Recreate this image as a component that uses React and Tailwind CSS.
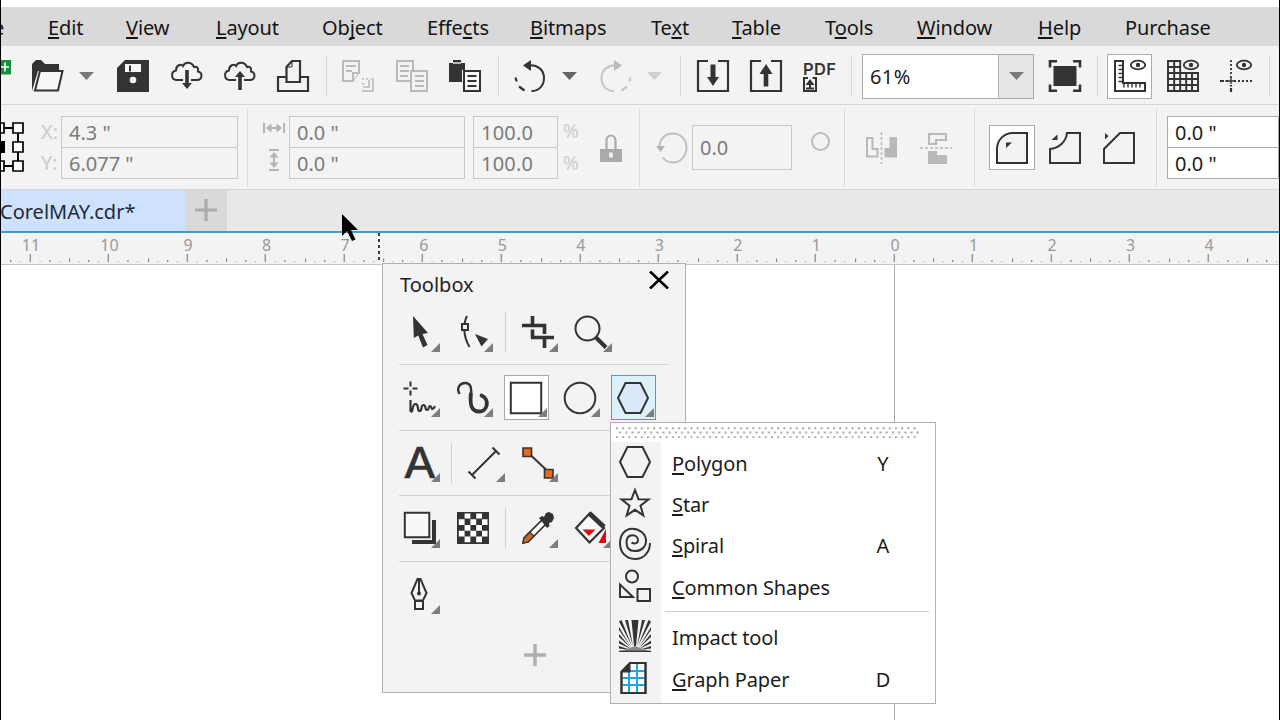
import React from 'react';

const DARK = '#333333';
const FADED = '#b9b9b9';

// width = distance from this label to the next one
const menuItems = [
  { pre: '', key: 'E', post: 'dit', width: 'w-[78px]' },
  { pre: '', key: 'V', post: 'iew', width: 'w-[90px]' },
  { pre: '', key: 'L', post: 'ayout', width: 'w-[106px]' },
  { pre: 'Ob', key: 'j', post: 'ect', width: 'w-[105px]' },
  { pre: 'Effe', key: 'c', post: 'ts', width: 'w-[103px]' },
  { pre: '', key: 'B', post: 'itmaps', width: 'w-[121px]' },
  { pre: 'Te', key: 'x', post: 't', width: 'w-[81px]' },
  { pre: '', key: 'T', post: 'able', width: 'w-[93px]' },
  { pre: 'T', key: 'o', post: 'ols', width: 'w-[92px]' },
  { pre: '', key: 'W', post: 'indow', width: 'w-[121px]' },
  { pre: '', key: 'H', post: 'elp', width: 'w-[87px]' },
  { pre: 'Purchase', key: '', post: '', width: 'w-[90px]' },
];

const rulerMarks = ['11', '10', '9', '8', '7', '6', '5', '4', '3', '2', '1', '0', '1', '2', '3', '4', ''];

function Icon({ children, className = '', color = DARK, sw = 2 }) {
  return (
    <svg viewBox="0 0 32 32" fill="none" stroke={color} strokeWidth={sw} className={`block w-8 h-8 shrink-0 overflow-visible ${className}`}>
      {children}
    </svg>
  );
}

function Label({ pre = '', hot = '', post = '' }) {
  return (
    <span>
      {pre}
      {hot && <span className="underline decoration-[1.5px] underline-offset-[2px] [text-decoration-skip-ink:none]">{hot}</span>}
      {post}
    </span>
  );
}

function Caret({ className = '' }) {
  return (
    <svg viewBox="0 0 15 8" className={`block w-[15px] h-2 shrink-0 ${className}`}>
      <path d="M0 0h15L7.5 8z" fill="currentColor" />
    </svg>
  );
}

function BarDivider({ className = '' }) {
  return <div className={`w-px h-10 shrink-0 bg-[#d6d6d6] ${className}`} />;
}

function PropDivider({ className = '' }) {
  return <div className={`w-px h-[79px] shrink-0 bg-[#dadada] ${className}`} />;
}

function Eye() {
  return (
    <g>
      <ellipse cx="24" cy="5" rx="7.2" ry="4.3" strokeWidth="1.8" />
      <circle cx="24" cy="5" r="2.2" fill={DARK} stroke="none" />
    </g>
  );
}

function DoubleField({ top, bottom, className = '' }) {
  return (
    <div className={`flex flex-col shrink-0 h-[63px] border ${className}`}>
      <div className="flex-1 flex items-center pl-[7px] pt-[2px] border-b border-inherit whitespace-pre">{top}</div>
      <div className="flex-1 flex items-center pl-[7px] pt-[2px] whitespace-pre">{bottom}</div>
    </div>
  );
}

function MenuBar() {
  return (
    <div className="h-[39px] shrink-0 bg-[#d9d9d9] flex items-center pt-[2px] text-[#151515]">
      <div className="w-[48px] shrink-0 overflow-hidden"><span className="-ml-[7px]">e</span></div>
      {menuItems.map((item) => (
        <div key={item.pre + item.key + item.post} className={`shrink-0 tracking-[-0.1px] ${item.width}`}>
          <Label pre={item.pre} hot={item.key} post={item.post} />
        </div>
      ))}
    </div>
  );
}

function StandardBar() {
  return (
    <div className="h-[59px] shrink-0 bg-[#f3f3f3] border-b border-[#d6d6d6] flex items-center pt-[2px] overflow-hidden">
      <svg viewBox="0 0 11 32" className="block w-[11px] h-8 shrink-0">
        <path d="M0 0h11v14.500H0z" fill="#14913d" />
        <path d="M5 2.500v9M0 7h9" stroke="#fff" strokeWidth="1.6" />
      </svg>
      <Icon className="ml-[21px]">
        <path d="M0 31V4L4 0h5l4 4h14v7H6z" fill={DARK} stroke="none" />
        <path d="M8 11h22.500L26 30.500H3z" fill="#f8f8f8" />
      </Icon>
      <Caret className="ml-[15px] text-[#777]" />
      <Icon className="ml-[23px]">
        <path d="M8 0h24v32H0V8z" fill={DARK} stroke="none" />
        <path d="M8 4h16v8H8z" fill="#f5f5f5" stroke="none" />
        <path d="M13 5.500v6" />
        <circle cx="16" cy="20" r="3.300" fill="#f5f5f5" stroke="none" />
      </Icon>
      <Icon className="ml-[22px]">
        <path d="M12 20H5.500a4.800 4.800 0 0 1-.5-9.500C5 5 10 3.500 12 6c1.500-4 8.500-5 11 1 3-1 5 1.500 4 4.500 5 1 4.500 8.500-1 8.500h-6" />
        <path d="M16 10v14" strokeWidth="3.600" />
        <path d="M11 23h10l-5 6z" fill={DARK} stroke="none" />
      </Icon>
      <Icon className="ml-[21px]">
        <path d="M12 20H5.500a4.800 4.800 0 0 1-.5-9.500C5 5 10 3.500 12 6c1.500-4 8.500-5 11 1 3-1 5 1.500 4 4.500 5 1 4.500 8.500-1 8.500h-6" />
        <path d="M16 30V15" strokeWidth="3.600" />
        <path d="M11 17h10l-5-6z" fill={DARK} stroke="none" />
      </Icon>
      <Icon className="ml-[21px]" sw={2.200}>
        <path d="M10 17H1v14h30V17h-8" />
        <path d="M9.500 22V7L15 1h8v21z" />
        <path d="M15 1v6h-5" strokeWidth="1" />
      </Icon>
      <BarDivider className="ml-[17px]" />
      <Icon className="ml-[15px]" color={FADED}>
        <path d="M1 1h16v12h-6v8H1zM4 6h10M4 11h6" />
        <path d="M17 13l-6 8" strokeWidth="1" />
        <path d="M20 19h9M20 24h3" strokeWidth="1.500" strokeDasharray="2 2" />
        <path d="M31 18v13H20M27 20v7H21" strokeWidth="1.600" />
      </Icon>
      <Icon className="ml-[22px]" color={FADED}>
        <path d="M14 21H1V1h16v9M4 6h9M4 11h9M4 16h8" />
        <path d="M15 11h16v20H15zM19 16h9M19 21h9M19 26h9" />
      </Icon>
      <Icon className="ml-[21px]">
        <path d="M0 3h4V0h8v3h4v7h-3v12H0z" fill={DARK} stroke="none" />
        <path d="M4 3h8" stroke="#f3f3f3" strokeWidth="1.400" />
        <path d="M15 11h16v20H15z" fill="#f8f8f8" />
        <path d="M18.500 16h9M18.500 21h9M18.500 26h9" />
      </Icon>
      <BarDivider className="ml-[17px]" />
      <Icon className="ml-[15px]">
        <path d="M14 5.500C24 4 30 10.500 30 18s-5 13-12.500 13" />
        <path d="M17 0v11L9 5.500z" fill={DARK} stroke="none" />
        <path d="M1.500 17.500l1.200 4M5 26.500l5.500 4" strokeWidth="2.200" />
      </Icon>
      <Caret className="ml-[16px] text-[#666]" />
      <Icon className="ml-[23px]" color="#c6c6c6">
        <path d="M18 5.500C8 4 1.500 10.500 1.500 18s5 13 12.500 13" />
        <path d="M14 0v11l8-5.500z" fill="#bbb" stroke="none" />
        <path d="M30.500 17.500l-1.200 4M27 26.500l-5.500 4" strokeWidth="2.200" />
      </Icon>
      <Caret className="ml-[15px] text-[#cfcfcf]" />
      <BarDivider className="ml-[18px]" />
      <Icon className="ml-[16px]" sw={2.200}>
        <path d="M11 1H1v30h30V1H21" />
        <path d="M16 4.500V19" strokeWidth="5" />
        <path d="M10 17h12l-6 9z" fill={DARK} stroke="none" />
      </Icon>
      <Icon className="ml-[21px]" sw={2.200}>
        <path d="M11 1H1v30h30V1H21" />
        <path d="M16 26.500V12" strokeWidth="4.600" />
        <path d="M9.500 14h13L16 4z" fill={DARK} stroke="none" />
      </Icon>
      <div className="ml-[21px] w-[34px] h-8 shrink-0 flex flex-col text-[#333]">
        <span className="h-[17px] leading-[18px] text-[16.500px] font-semibold tracking-[0.300px] font-['Inter']">PDF</span>
        <svg viewBox="0 0 14 15" className="block w-[14px] h-[15px]" fill="none" stroke={DARK} strokeWidth="2">
          <path d="M5 1H1v13h12V1H9.500M7 12V6M3 11.500h8" />
          <path d="M2.500 8h9L7 2z" fill={DARK} stroke="none" />
        </svg>
      </div>
      <BarDivider className="ml-[14px]" />
      <div className="ml-[10px] w-[172px] h-[45px] shrink-0 border-[1.500px] border-[#ababab] bg-white flex items-center">
        <span className="pl-[7px] pt-[2px] flex-1 text-[#222] tracking-[0.400px]">61%</span>
        <div className="w-[35px] h-full bg-[#e6e6e6] border-l border-[#b5b5b5] flex items-center justify-center">
          <Caret className="text-[#7a7a7a]" />
        </div>
      </div>
      <Icon className="ml-[15px]" sw={2.600}>
        <path d="M4.500 6h23v20h-23z" fill={DARK} stroke="none" />
        <path d="M1 7.500V1.200h7M24 1.200h7v6.300M31 24.500v6.300h-7M8 30.800H1v-6.300" />
      </Icon>
      <BarDivider className="ml-[16px]" />
      <div className="ml-[9px] w-[45px] h-[45px] shrink-0 bg-white border border-[#aaaaaa] flex items-center justify-center">
        <Icon>
          <path d="M1 1h8v22h22v8H1z" />
          <path d="M4.500 5.500H9M4.500 9.500H9M4.500 13.500H9M4.500 17.500H9M4.500 21.500H9M10 23v4.500M14 23v4.500M18 23v4.500M22 23v4.500M26 23v4.500" strokeWidth="1.400" />
          <Eye />
        </Icon>
      </div>
      <Icon className="ml-[15px]" sw={1.900}>
        <path d="M1 0v32M7.200 0v32M13.200 0v32M19.200 12v20M25 12v20M31 12v20M0 1h14M0 7h14M0 13h32M0 19h32M0 25h32M0 31h32" />
        <Eye />
      </Icon>
      <Icon className="ml-[21px]">
        <path d="M11 0v20M14 21h18" strokeDasharray="2 2" strokeWidth="1.800" />
        <path d="M11 18v6M8 21h6" strokeWidth="1.400" />
        <path d="M0 21h4M5.500 21H8M11 25v1.500M11 28v4" strokeWidth="2.200" />
        <Eye />
      </Icon>
      <BarDivider className="ml-[17px]" />
    </div>
  );
}

function PropertyBar() {
  return (
    <div className="h-[85px] shrink-0 bg-[#f3f3f3] border-b border-[#d6d6d6] flex items-center overflow-hidden text-[#7b7b7b]">
      <svg viewBox="0 0 24 50" className="block w-6 h-[50px] shrink-0" fill="none" stroke="#000" strokeWidth="2">
        <path d="M0 6h18v38H0" />
        <path d="M-6 1h10v10H-6zM13 1h10v10H13zM13 20h10v10H13zM-6 39h10v10H-6zM13 39h10v10H13z" fill="#fff" strokeWidth="1.700" />
        <path d="M0 19h5v12H0z" fill="#000" stroke="none" />
      </svg>
      <div className="ml-[17px] w-[20px] h-[63px] shrink-0 flex flex-col text-[#cccccc]">
        <span className="flex-1 flex items-center pt-px">X:</span>
        <span className="flex-1 flex items-center pt-px">Y:</span>
      </div>
      <DoubleField top={'4.3 "'} bottom={'6.077 "'} className="w-[177px] border-[#c9c9c9]" />
      <PropDivider className="ml-[9px]" />
      <div className="ml-[14px] w-[23px] h-[63px] shrink-0 flex flex-col items-center justify-around">
        <svg viewBox="0 0 22 10" className="block w-[22px] h-[10px]" fill="none" stroke="#b4b4b4" strokeWidth="2">
          <path d="M1 0v10M21 0v10M6 5h10" />
          <path d="M3 5l5.500-4.500v9zM19 5l-5.500-4.500v9z" fill="#b4b4b4" stroke="none" />
        </svg>
        <svg viewBox="0 0 10 22" className="block w-[10px] h-[22px]" fill="none" stroke="#b4b4b4" strokeWidth="2">
          <path d="M0 1h10M0 21h10M5 6v10" />
          <path d="M5 3L.5 8.500h9zM5 19L.5 13.500h9z" fill="#b4b4b4" stroke="none" />
        </svg>
      </div>
      <DoubleField top={'0.0 "'} bottom={'0.0 "'} className="ml-[4px] w-[176px] border-[#c9c9c9]" />
      <DoubleField top="100.0" bottom="100.0" className="ml-[8px] w-[85px] tracking-[0.200px] border-[#c9c9c9]" />
      <div className="ml-[5px] w-[20px] h-[63px] shrink-0 flex flex-col text-[19px] text-[#cccccc]">
        <span className="flex-1 flex items-center pt-px">%</span>
        <span className="flex-1 flex items-center pt-px">%</span>
      </div>
      <svg viewBox="0 0 22 28" className="ml-[17px] mt-px block w-[22px] h-7 shrink-0">
        <path d="M6.500 15V6.500a4.500 5 0 0 1 9 0V15" fill="none" stroke="#aaa" strokeWidth="2.200" />
        <path d="M0 15h22v13H0z" fill="#aaa" />
        <path d="M11 18.500v5" stroke="#f3f3f3" strokeWidth="3.500" />
      </svg>
      <PropDivider className="ml-[17px]" />
      <Icon className="ml-[16px] mt-px" color="#c0c0c0">
        <path d="M3.500 14C4 6 10 1.500 17 1.500c8 0 13.500 6.500 13.500 14S25 30.500 17 30.500c-4 0-8-2-10-5" />
        <path d="M0 14h9l-4.500 6z" fill="#b0b0b0" stroke="none" />
      </Icon>
      <div className="ml-[4px] mt-px w-[100px] h-[45px] shrink-0 border border-[#c9c9c9] flex items-center pl-[7px] pt-px">0.0</div>
      <div className="ml-[19px] w-[19px] h-[19px] shrink-0 rounded-full border-[2.500px] border-[#bdbdbd] -mt-[12px]" />
      <PropDivider className="ml-[14px]" />
      <Icon className="ml-[21px] mt-px" color={FADED}>
        <path d="M1 6h5.500v11h5v7.500H1z" />
        <path d="M30 6h-5.500v11h-5v7.500H30z" fill={FADED} />
        <path d="M15.500 0v32" strokeWidth="1.600" strokeDasharray="3 2" />
      </Icon>
      <Icon className="ml-[22px] mt-px" color={FADED}>
        <path d="M9 2h17v6H16v4H9z" />
        <path d="M9 20h7v4h10v7H9z" fill={FADED} />
        <path d="M0 16h32" strokeWidth="1.600" strokeDasharray="3 2" />
      </Icon>
      <PropDivider className="ml-[22px]" />
      <div className="ml-[14px] mt-px w-[46px] h-[45px] shrink-0 bg-white border border-[#aaaaaa] flex items-center justify-center">
        <Icon>
          <path d="M1 31V17C1 8 8 1 17 1h14v30z" fill="#f3f3f3" />
          <path d="M10 10.500h6L10 16z" fill={DARK} stroke="none" />
        </Icon>
      </div>
      <Icon className="ml-[14px] mt-px">
        <path d="M1 31V17C10 16 17 10 18 1h13v30z" />
        <path d="M8.500 2.500V8H2.500z" fill={DARK} stroke="none" />
      </Icon>
      <Icon className="ml-[22px] mt-px">
        <path d="M1 31V17L17 1h14v30z" />
        <path d="M2 1v6.500L5.500 4z" fill={DARK} stroke="none" />
      </Icon>
      <PropDivider className="ml-[21px]" />
      <DoubleField top={'0.0 "'} bottom={'0.0 "'} className="ml-[10px] w-[112px] bg-white border-[#aaaaaa] text-[#1c1c1c]" />
    </div>
  );
}

function TabStrip() {
  return (
    <div className="h-[43px] shrink-0 bg-[#e8e8e8] border-b-2 border-[#3c9fc4] flex items-stretch">
      <div className="w-[185px] bg-[#cfe2fd] flex items-center pt-[2px] text-[#1f2a38] overflow-hidden">CorelMAY.cdr*</div>
      <div className="w-[42px] bg-[#d9d9d9] flex items-center justify-center">
        <svg viewBox="0 0 22 22" className="block w-[22px] h-[22px] -mt-[2px]">
          <path d="M11 0v22M0 11h22" stroke="#ababab" strokeWidth="3.200" />
        </svg>
      </div>
    </div>
  );
}

function Ruler() {
  return (
    <div className="h-[32px] shrink-0 bg-[#f3f3f3] border-b border-[#c4c4c4] overflow-hidden">
      <div className="flex -ml-[9.300px]">
        {rulerMarks.map((n, i) => (
          <div key={i} className="w-[78.550px] shrink-0 flex flex-col items-center">
            <span className="h-[21px] leading-[24px] pl-[2px] text-[16px] text-[#999]">{n}</span>
            <svg viewBox="0 0 78.550 10" className="block w-[78.550px] h-[10px]" stroke="#888" strokeWidth="1">
              <path d="M39.300 0v8" stroke="#999" strokeWidth="1.500" />
              <path d="M.5 4.500V8M19.700 6v2M58.900 6v2" strokeWidth="1.300" />
              <path d="M9.900 7v1.200M29.500 7v1.200M49.100 7v1.200M68.700 7v1.200" stroke="#aaa" />
            </svg>
          </div>
        ))}
      </div>
    </div>
  );
}

function Tool({ children, flyout = true, className = 'border border-transparent' }) {
  return (
    <div className={`relative w-[45px] h-[45px] shrink-0 flex items-center justify-center ${className}`}>
      {children}
      {flyout && (
        <svg viewBox="0 0 9 9" className="absolute right-px bottom-[2px] block w-[9px] h-[9px]">
          <path d="M9 0v9H0z" fill="#7d7d7d" />
        </svg>
      )}
    </div>
  );
}

function ToolRow({ children }) {
  return (
    <div className="h-[65.400px] shrink-0 flex items-center">
      <div className="-ml-[2px] flex items-center gap-[8.400px]">{children}</div>
    </div>
  );
}

function ToolDivider() {
  return <div className="w-px h-10 shrink-0 bg-[#cfcfcf] mx-[1px]" />;
}

function Hexagon({ fill = 'none' }) {
  return <path d="M1 16L8.500 1h15L31 16l-7.500 15h-15z" fill={fill} />;
}

function Toolbox() {
  return (
    <div className="absolute left-[382px] top-[263px] w-[304px] h-[430px] bg-[#f3f3f3] border-[1.500px] border-[#b0b0b0] px-4 flex flex-col">
      <div className="h-[36px] shrink-0 flex items-center justify-between pl-px text-[#222]">
        <span className="mt-[6px]">Toolbox</span>
        <svg viewBox="0 0 20 18" className="block w-5 h-[18px] -mt-[4px]">
          <path d="M1 .5l18 17M19 .5l-18 17" stroke="#000" strokeWidth="2.600" />
        </svg>
      </div>
      <div className="flex flex-col divide-y divide-[#d2d2d2]">
        <ToolRow>
          <Tool>
            <Icon>
              <path d="M9 0l15 17-5.500 1 5 11-4.500 2.500-4.800-12L9.800 22z" fill={DARK} stroke="none" />
            </Icon>
          </Tool>
          <Tool>
            <Icon>
              <path d="M10 0C6 8 6 20 12.500 31" />
              <path d="M5 8h6v6H5z" fill="#f3f3f3" />
              <path d="M18 18l13 5-6.500 7.500z" fill={DARK} stroke="none" />
            </Icon>
          </Tool>
          <ToolDivider />
          <Tool>
            <Icon sw={3.600}>
              <path d="M0 9.500h22.500V18M10.500 0v9M9 21.500h23M10.500 13.500v8M22.500 23v9" />
            </Icon>
          </Tool>
          <Tool>
            <Icon>
              <circle cx="12.500" cy="12.500" r="12" />
              <path d="M21 21.500l10 10" strokeWidth="4" />
            </Icon>
          </Tool>
        </ToolRow>
        <ToolRow>
          <Tool>
            <Icon>
              <path d="M6.500-.5v5M6.500 8.500v5M-.5 6.500h5M8.500 6.500h5" strokeWidth="2" />
              <path d="M6.500 18v11c3 3 1-7 5-7 4 0 1 7 4 7s1-6 4-6 1 5 3.500 5 1-4 3-4 1 3 2.500 3 1.500-2.500 3-2.500" strokeWidth="2.200" />
            </Icon>
          </Tool>
          <Tool>
            <Icon>
              <path d="M2.500 12C-1 6 3 1 8 1c8 0 6 9 6 14" strokeWidth="2.400" />
              <path d="M13.800 12C13 22 14 29 21.500 29.500 31 30 33 17 24.500 13.500" strokeWidth="3.800" strokeLinecap="round" />
            </Icon>
          </Tool>
          <Tool className="bg-white border border-[#a8a8a8]">
            <Icon>
              <path d="M.8.8h30.400v30.400H.8z" />
            </Icon>
          </Tool>
          <Tool>
            <Icon>
              <circle cx="16" cy="16" r="15.300" />
            </Icon>
          </Tool>
          <Tool className="bg-[#dcf1fa] border-[1.500px] border-[#3aa7cf]">
            <Icon>
              <Hexagon fill="#dbe8fb" />
            </Icon>
          </Tool>
        </ToolRow>
        <ToolRow>
          <Tool>
            <span className="text-[43px] leading-[45px] font-['Inter'] font-normal [-webkit-text-stroke:0.700px_#333] scale-x-110 text-[#333]">A</span>
          </Tool>
          <ToolDivider />
          <Tool>
            <Icon>
              <path d="M4 28L28 4M.5 24.500l7 7M24.500.5l7 7" />
            </Icon>
          </Tool>
          <Tool>
            <Icon>
              <path d="M8 7.500l17 16" />
              <path d="M1 1h8.500v8.500H1zM22.500 22.500H31V31h-8.500z" fill="#e46a1c" strokeWidth="1.600" />
            </Icon>
          </Tool>
        </ToolRow>
        <ToolRow>
          <Tool>
            <Icon>
              <path d="M.8.8h24.500v24.500H.8z" fill="#f8f8f8" />
              <path d="M8 30h22V8" strokeWidth="4" />
            </Icon>
          </Tool>
          <Tool flyout={false}>
            <Icon>
              <path d="M0 0h32v32H0z" fill={DARK} stroke="none" />
              <path
                d="M7.600 1.500h5.800v5h-5.800zM19.200 1.500H25v5h-5.800zM1.800 7.200h5.800V13H1.800zM13.400 7.200h5.800V13h-5.800zM25 7.200h5.500V13H25zM7.600 13h5.800v5.800H7.600zM19.200 13H25v5.800h-5.800zM1.800 18.800h5.800v5.800H1.800zM13.400 18.800h5.800v5.800h-5.800zM25 18.800h5.500v5.800H25zM7.600 24.600h5.800v5.600H7.600zM19.200 24.600H25v5.600h-5.800z"
                fill="#fff"
                stroke="none"
              />
            </Icon>
          </Tool>
          <ToolDivider />
          <Tool>
            <Icon>
              <path d="M1 31l1-5L20 8l4 4L6 30z" fill="#fff" strokeWidth="1.700" />
              <path d="M1 31l1-5 6-6 4 4-6 6z" fill="#c8692c" strokeWidth="1.200" />
              <path d="M17 6l3-2 2 1 2-4 3-1 4 2 1 4-2 4-3 1 .5 3-2.500 2z" fill={DARK} stroke="none" />
            </Icon>
          </Tool>
          <Tool>
            <Icon sw={2.200}>
              <path d="M1 16L14.500 1.500 29 16 14.500 30.500z" fill="#f8f8f8" />
              <path d="M14 1l15 14" strokeWidth="5" />
              <path d="M7.500 17.500h13L14 24z" fill="#e30613" stroke="none" />
              <path d="M23.500 31l7.500-14v14z" fill="#e30613" stroke="none" />
            </Icon>
          </Tool>
        </ToolRow>
        <ToolRow>
          <Tool>
            <Icon>
              <path d="M13.500 1h3L22.500 15 19 22.500h-8L7.500 15z" />
              <path d="M11 23h8v8h-8z" />
              <path d="M15 2v13" />
              <circle cx="15" cy="15.500" r="2" fill={DARK} stroke="none" />
            </Icon>
          </Tool>
        </ToolRow>
      </div>
      <svg viewBox="0 0 22 22" className="self-center block w-[22px] h-[22px] mt-[17px] ml-[1px]">
        <path d="M11 0v22M0 11h22" stroke="#b0b0b0" strokeWidth="3.500" />
      </svg>
    </div>
  );
}

function FlyoutItem({ icon, hot, text, shortcut }) {
  return (
    <div className="h-[41.400px] flex items-center">
      <div className="w-[50px] h-full shrink-0 flex items-center pl-[7.500px] pb-[2px]">{icon}</div>
      <div className="pl-[11px] pt-[2px] w-[211px] shrink-0 tracking-[-0.120px]"><Label hot={hot} post={text} /></div>
      <div className="w-[22px] pt-[2px] text-center">{shortcut}</div>
    </div>
  );
}

function Flyout() {
  return (
    <div className="absolute left-[610px] top-[422px] w-[326px] h-[282px] bg-white border-[1.500px] border-[#b0b0b0] text-[#1c1c1c]">
      <svg className="block w-[303px] h-[11px] ml-[5px] mt-[4px]">
        <defs>
          <pattern id="grip" width="6.200" height="9" patternUnits="userSpaceOnUse">
            <path d="M0 .2h2v2H0zM3.100 4.500h2v2h-2z" fill="#a6a6a6" />
          </pattern>
        </defs>
        <rect width="303" height="11" fill="url(#grip)" />
      </svg>
      <div className="mt-[4px] bg-[linear-gradient(to_right,#f3f3f3_50px,#ffffff_50px)] h-[261px]">
        <FlyoutItem hot="P" text="olygon" shortcut="Y" icon={<Icon><Hexagon /></Icon>} />
        <FlyoutItem
          hot="S"
          text="tar"
          icon={<Icon><path d="M16 3l3.500 9.200 10 .3-8 6.200 2.800 9.600L16 22.800l-8.300 5.500 2.800-9.600-8-6.200 10-.3z" /></Icon>}
        />
        <FlyoutItem
          hot="S"
          text="piral"
          shortcut="A"
          icon={
            <Icon>
              <path d="M31 15C31 24 25 31 16 31S1 24 1 15.500 6 .8 13 .8 27 5.500 27 12.500 22 23 16 23 7.500 19.500 7.500 14.500 10 7.200 13.500 7.200 19 9.500 19 12.300 16 16.500 12.500 14.300" />
            </Icon>
          }
        />
        <FlyoutItem
          hot="C"
          text="ommon Shapes"
          icon={
            <Icon>
              <circle cx="13" cy="6.500" r="6" />
              <path d="M1 14.500V27h13zM18.500 19H31v12H18.500z" />
            </Icon>
          }
        />
        <div className="h-[9px] ml-[54px] mr-[6px]"><div className="h-[4px] border-b border-[#cfcfcf]" /></div>
        <FlyoutItem
          text="Impact tool"
          icon={
            <Icon>
              <path
                d="M12.500 0h7l-2.500 26h-2zM6 0h3L14 26zM26 0h-3L18 26zM0 1.500L2.500 0 13 26zM32 1.500L29.500 0 19 26zM0 10V7l12 20zM32 10V7L20 27zM0 17v-3l12 14zM32 17v-3L20 28zM0 23.500v-3L12 29zM32 23.500v-3L20 29zM0 28.500v-2.500L12 30zM32 28.500v-2.500L20 30z"
                fill={DARK}
                stroke="none"
              />
              <path d="M1 31.500L16 26l15 5.500z" fill="#8a8a8a" stroke="none" />
              <path d="M0 31.300h32" strokeWidth="1.300" />
            </Icon>
          }
        />
        <FlyoutItem
          hot="G"
          text="raph Paper"
          shortcut="D"
          icon={
            <Icon>
              <path d="M2.500 10L11 1h15.500v30h-24z" fill="#fff" />
              <path d="M10 9v21M18 2v28M3.500 16H26M3.500 23H26M11 9h15" stroke="#22a5dc" strokeWidth="2" />
              <path d="M2.500 10V31h24V1H11z" />
              <path d="M2 10.500L11.500 0v10.500z" fill={DARK} stroke="none" />
            </Icon>
          }
        />
      </div>
    </div>
  );
}

export default function App() {
  return (
    <div className="relative w-[1280px] h-[720px] bg-white overflow-hidden flex flex-col pt-[7px] text-[20px] leading-none whitespace-nowrap font-['Noto_Sans','Open_Sans',sans-serif]">
      <MenuBar />
      <StandardBar />
      <PropertyBar />
      <TabStrip />
      <Ruler />
      <div className="flex-1 flex">
        <div className="w-[895px] border-r-[1.500px] border-[#a8a8a8]" />
      </div>

      <svg viewBox="0 0 2 30" className="absolute left-[378px] top-[233px] block w-[2px] h-[30px]">
        <path d="M1 0v30" stroke="#000" strokeWidth="1.500" strokeDasharray="3 3" />
      </svg>
      <Toolbox />
      <Flyout />

      {/* mouse pointer */}
      <svg viewBox="0 0 17 30" className="absolute left-[341px] top-[213px] block w-[17px] h-[30px]">
        <path d="M1 1v22l5-5 5 10 3.500-1.500L10 17h7z" fill="#000" />
      </svg>

      {/* frame edges */}
      <div className="absolute left-0 top-0 w-px h-full bg-black" />
      <div className="absolute right-0 top-0 w-px h-full bg-black" />
    </div>
  );
}
